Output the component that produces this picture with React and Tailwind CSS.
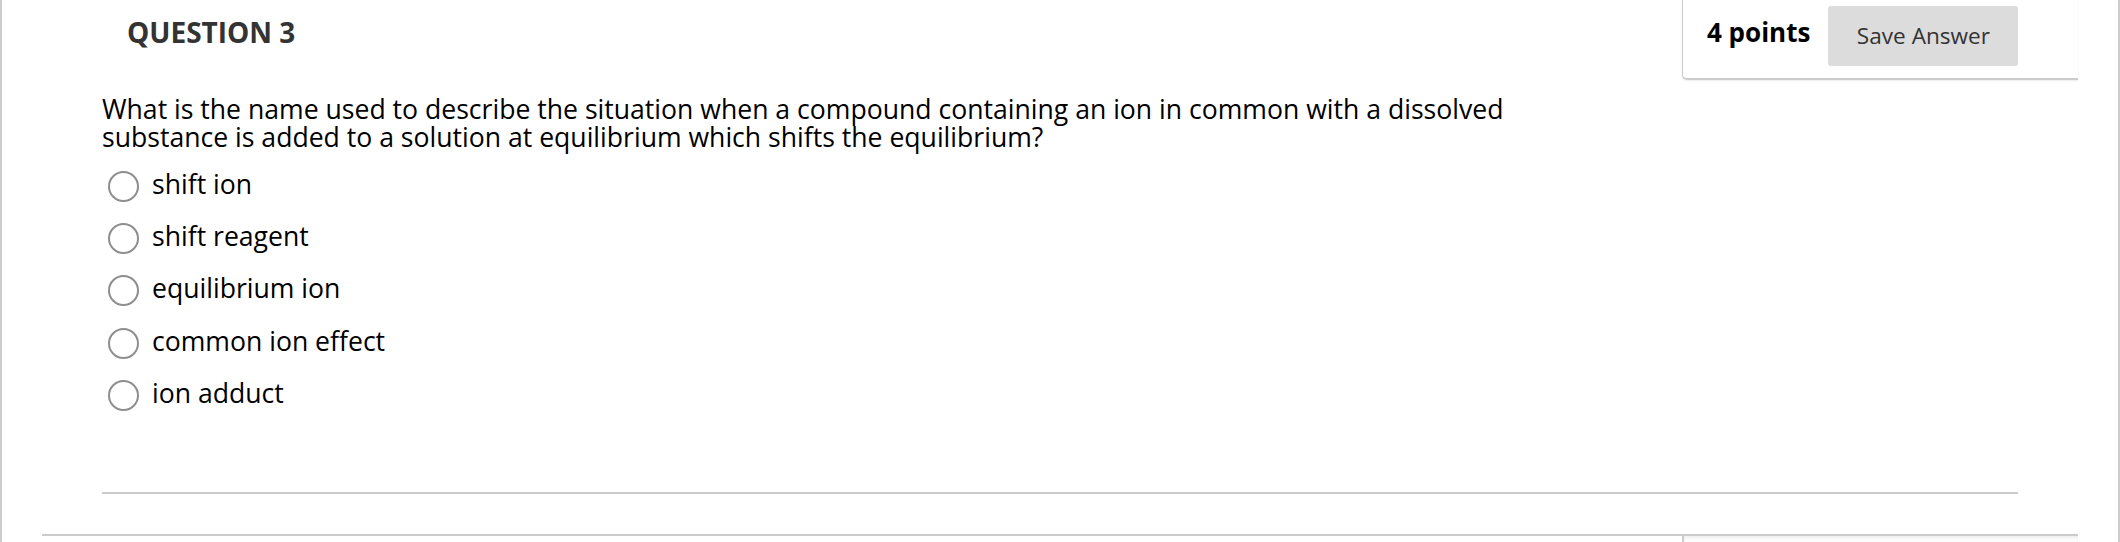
const options = ['shift ion', 'shift reagent', 'equilibrium ion', 'common ion effect', 'ion adduct'];

const Radio = () => (
    <span className="mt-[1px] h-[31px] w-[31px] shrink-0 rounded-full border-[2.5px] border-[#8e8e8e] bg-white" />
);

export default function App() {
    return (
        <div
            className="h-[542px] w-full overflow-hidden border-l-2 border-r-2 border-[#cccccc] bg-white text-black"
            style={{ fontFamily: '"Open Sans", "Liberation Sans", sans-serif' }}
        >
            {/* Question block */}
            <div className="relative ml-[40px] mr-[40px] border-b-2 border-[#cccccc]">
                <h3 className="pl-[85px] pt-[18px] text-[28px] font-bold leading-[28.5px] text-[#333333]">
                    QUESTION 3
                </h3>

                {/* Points / save box */}
                <div className="absolute right-0 top-0 flex h-[80px] w-[396px] items-start rounded-bl-[5px] border-b-2 border-l border-[#cccccc] bg-white pl-[24px] shadow-[0_1px_2px_rgba(0,0,0,0.08)]">
                    <span className="mt-[19px] text-[26px] font-bold leading-[26px] text-black">4 points</span>
                    <button className="ml-[18px] mt-[6px] h-[60px] w-[190px] rounded-[3px] bg-[#dcdcdc] pt-[1px] text-[22.6px] leading-[22.6px] text-[#333333]">
                        Save Answer
                    </button>
                </div>

                <div className="mx-[60px] mt-[48px] border-b-2 border-[#cccccc] pb-[81px]">
                    <p className="max-w-[1450px] text-[26.6px] leading-[28.5px]">
                        What is the name used to describe the situation when a compound containing an ion in common with a dissolved substance is added to a solution at equilibrium which shifts the equilibrium?
                    </p>

                    <div className="mt-[18px] flex flex-col gap-[20.4px]">
                        {options.map((opt) => (
                            <label key={opt} className="flex items-start pl-[6px]">
                                <Radio />
                                <span className="ml-[13px] text-[26.6px] leading-[28px]">{opt}</span>
                            </label>
                        ))}
                    </div>
                </div>
                <div className="h-[40px]" />
            </div>

            {/* Next question's points box, peeking in */}
            <div className="mr-[40px] flex justify-end">
                <div className="h-[6px] w-[396px] border-l-2 border-[#cccccc] bg-[#fcfcfc] shadow-[inset_0_2px_3px_rgba(0,0,0,0.05)]" />
            </div>
        </div>
    );
}
